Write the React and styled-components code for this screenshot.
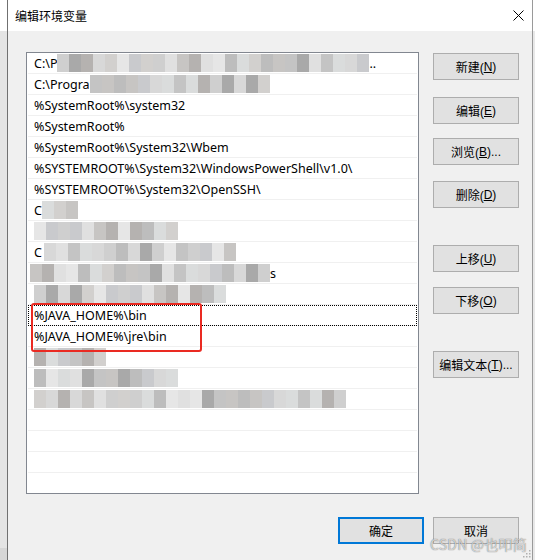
import React from 'react';
import styled, { createGlobalStyle } from 'styled-components';

const Global = createGlobalStyle`
  html, body { margin: 0; padding: 0; background: #e4e4e4; }
  body { font-family: "Liberation Sans", "Noto Sans CJK SC", sans-serif; }
  * { box-sizing: border-box; }
`;

const Page = styled.div`
  position: relative;
  display: flex;
  width: 535px;
  height: 560px;
  overflow: hidden;
`;

const Strip = styled.div`
  width: ${(p) => p.$w}px;
  flex: none;
  display: flex;
  flex-direction: column;
`;
const StripTop = styled.div`
  height: 31px;
  background: #fff;
`;
const StripMid = styled.div`
  flex: 1;
  background: ${(p) => p.$bg};
`;
const StripBottom = styled.div`
  height: 12px;
  background: #d6d6d6;
`;

const Window = styled.div`
  width: 526px;
  flex: none;
  display: flex;
  flex-direction: column;
  background: #f0f0f0;
  border-left: 1px solid #707070;
  border-right: 1px solid #9a9a9a;
`;

const TitleBar = styled.div`
  height: 31px;
  flex: none;
  background: #fff;
  display: flex;
  align-items: center;
  justify-content: space-between;
  padding: 0 8px 0 7px;
`;

const Title = styled.div`
  font-family: "Noto Sans CJK SC", sans-serif;
  font-size: 12px;
  color: #000;
`;

const Body = styled.div`
  display: grid;
  grid-template-columns: 393px 86px;
  column-gap: 14px;
  padding: 21px 13px 0 18px;
`;

const List = styled.div`
  position: relative;
  height: 442px;
  background: #fff;
  border: 1px solid #828790;
  padding: 0 1px;
  overflow: hidden;
`;

const Row = styled.div`
  height: 21px;
  border-bottom: 1px solid #f0f0f0;
  display: flex;
  align-items: center;
  padding-left: 6px;
  font-family: "Noto Sans", "Liberation Sans", sans-serif;
  font-size: 12.5px;
  color: #000;
  white-space: nowrap;
  ${(p) => (p.$focus ? 'outline: 1px dotted #000; outline-offset: -1px;' : '')}
`;

const Mosaic = styled.span`
  display: inline-flex;
  height: 18px;
  margin-left: ${(p) => p.$lead || 0}px;
`;

const Cell = styled.span`
  width: 12px;
  height: 18px;
  background: ${(p) => p.$tone};
`;

const Annotation = styled.div`
  position: absolute;
  left: 4px;
  top: 250px;
  width: 171px;
  height: 49px;
  border: 2px solid #ea2a22;
  border-radius: 3px;
  pointer-events: none;
`;

const ButtonColumn = styled.div`
  display: flex;
  flex-direction: column;
  padding-top: 1px;
`;

const Button = styled.button`
  width: 86px;
  height: 27px;
  margin: ${(p) => p.$gap || 0}px 0 0 0;
  padding: 0;
  background: #e1e1e1;
  border: ${(p) => (p.$primary ? '2px solid #0078d7' : '1px solid #adadad')};
  font-family: "Liberation Sans", "Noto Sans CJK SC", sans-serif;
  font-size: 12px;
  color: #000;
  display: flex;
  align-items: center;
  justify-content: center;
`;

const Key = styled.span`
  text-decoration: underline;
`;

const Footer = styled.div`
  grid-column: 1 / -1;
  display: flex;
  justify-content: flex-end;
  gap: 9px;
  margin-top: 23px;
`;

const Watermark = styled.div`
  position: absolute;
  left: 430px;
  top: 536px;
  font-family: "Noto Sans CJK SC", sans-serif;
  font-size: 14px;
  line-height: 17px;
  color: rgba(255, 255, 255, 0.7);
  text-shadow: 0 0 1px rgba(60, 60, 60, 0.9);
  letter-spacing: 0.2px;
  pointer-events: none;
`;

const Grip = styled.svg`
  position: absolute;
  right: 4px;
  bottom: 2px;
`;

const palette = ['#cfcfcf', '#d8d8d8', '#c4c4c4', '#bdbdbd', '#e0e0e0', '#d2d0ce', '#b5b2b0', '#c9cacd', '#a9a9a9', '#dadcdc', '#c7c5c3', '#e6e6e6'];

function MosaicRun({ n, seed, lead }) {
  const cells = [];
  for (let i = 0; i < n; i++) {
    const idx = (i * 7 + seed * 13 + ((i * i + seed) % 5)) % palette.length;
    cells.push(<Cell key={i} $tone={palette[idx]} />);
  }
  return <Mosaic $lead={lead}>{cells}</Mosaic>;
}

const rows = [
  { text: 'C:\\P', mosaic: 26, tail: '..' },
  { text: 'C:\\Progra', mosaic: 15 },
  { text: '%SystemRoot%\\system32' },
  { text: '%SystemRoot%' },
  { text: '%SystemRoot%\\System32\\Wbem' },
  { text: '%SYSTEMROOT%\\System32\\WindowsPowerShell\\v1.0\\' },
  { text: '%SYSTEMROOT%\\System32\\OpenSSH\\' },
  { text: 'C', mosaic: 3 },
  { text: '', mosaic: 12 },
  { text: 'C', mosaic: 16, lead: 2 },
  { text: '', mosaic: 20, lead: -4, tail: 's' },
  { text: '', mosaic: 16 },
  { text: '%JAVA_HOME%\\bin', focus: true },
  { text: '%JAVA_HOME%\\jre\\bin' },
  { text: '', mosaic: 6 },
  { text: '', mosaic: 12 },
  { text: '', mosaic: 26 },
  { text: '' },
  { text: '' },
  { text: '' },
  { text: '' },
  { text: '' },
];

export default function App() {
  return (
    <>
      <Global />
      <Page>
        <Strip $w={7}>
          <StripTop />
          <StripMid $bg="#e4e4e4" />
          <StripBottom />
        </Strip>
        <Window>
          <TitleBar>
            <Title>编辑环境变量</Title>
            <svg width="11" height="11" viewBox="0 0 11 11">
              <path d="M0.5 0.5 L10.5 10.5 M10.5 0.5 L0.5 10.5" stroke="#000" strokeWidth="1" fill="none" />
            </svg>
          </TitleBar>
          <Body>
            <List>
              {rows.map((r, i) => (
                <Row key={i} $focus={r.focus}>
                  {r.text}
                  {r.mosaic ? <MosaicRun n={r.mosaic} seed={i} lead={r.lead} /> : null}
                  {r.tail || null}
                </Row>
              ))}
              <Annotation />
            </List>
            <ButtonColumn>
              <Button>新建(<Key>N</Key>)</Button>
              <Button $gap={17}>编辑(<Key>E</Key>)</Button>
              <Button $gap={14}>浏览(<Key>B</Key>)...</Button>
              <Button $gap={16}>删除(<Key>D</Key>)</Button>
              <Button $gap={37}>上移(<Key>U</Key>)</Button>
              <Button $gap={15}>下移(<Key>O</Key>)</Button>
              <Button $gap={37}>编辑文本(<Key>T</Key>)...</Button>
            </ButtonColumn>
            <Footer>
              <Button $primary>确定</Button>
              <Button>取消</Button>
            </Footer>
          </Body>
        </Window>
        <Strip $w={2}>
          <StripTop />
          <StripMid $bg="#e8e8e8" />
        </Strip>
        <Watermark>CSDN @也叩简</Watermark>
        <Grip width="8" height="8" viewBox="0 0 8 8">
          <rect x="6" y="0" width="1.5" height="1.5" fill="#b0b0b0" />
          <rect x="3" y="3" width="1.5" height="1.5" fill="#b0b0b0" />
          <rect x="6" y="3" width="1.5" height="1.5" fill="#b0b0b0" />
          <rect x="0" y="6" width="1.5" height="1.5" fill="#b0b0b0" />
          <rect x="3" y="6" width="1.5" height="1.5" fill="#b0b0b0" />
          <rect x="6" y="6" width="1.5" height="1.5" fill="#b0b0b0" />
        </Grip>
      </Page>
    </>
  );
}
